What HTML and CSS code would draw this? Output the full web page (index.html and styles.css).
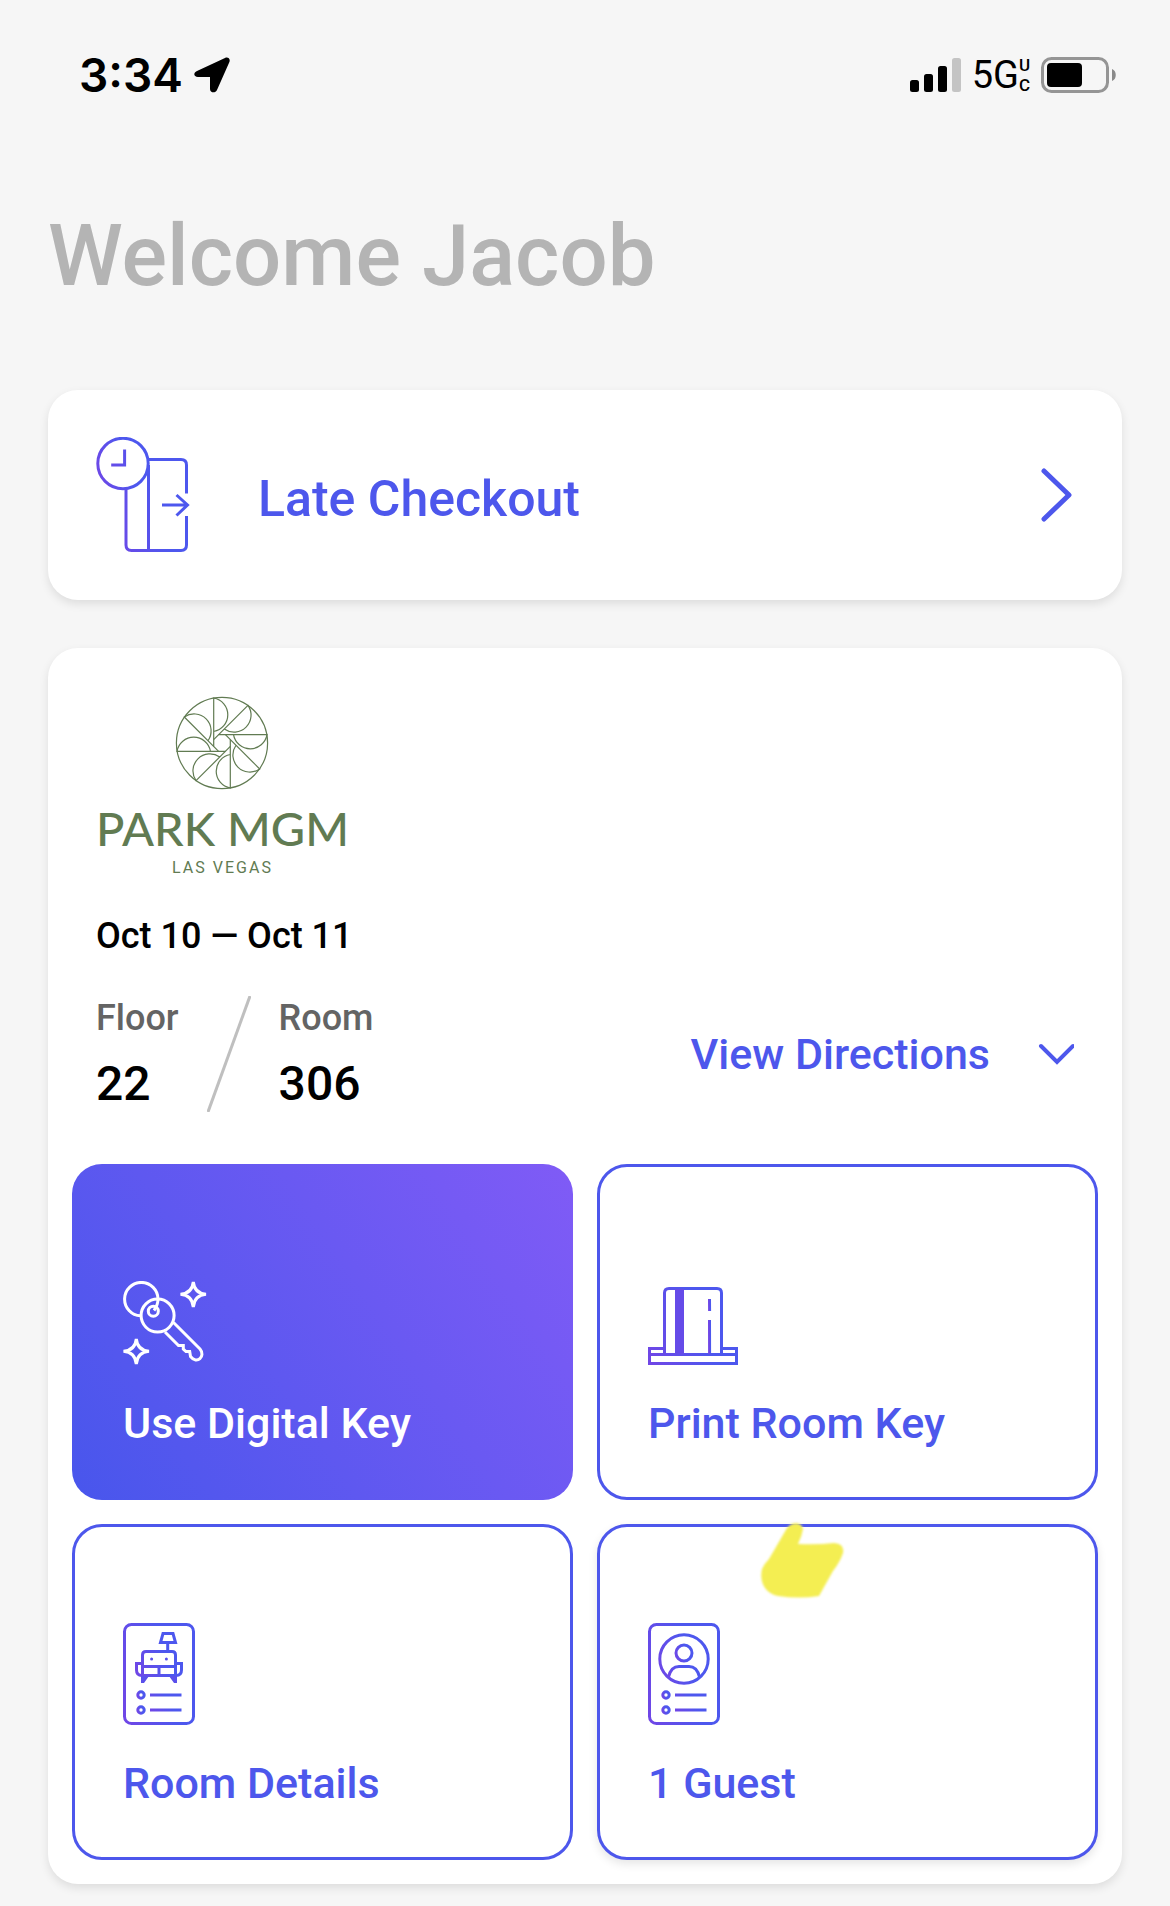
FILE: index.html
```html
<!DOCTYPE html>
<html lang="en">
  <head>
    <meta charset="UTF-8" />
    <meta name="viewport" content="width=device-width, initial-scale=1.0" />
    <title>My Stay</title>
    <link rel="stylesheet" href="styles.css">
  </head>
  <body>
    <div class="status-bar">
      <div class="status-left">
        <span class="status-time">3:34</span>
        <svg width="36" height="36" viewBox="0 0 36 36">
          <path d="M3 14 31 1C34-.4 36.600 2 35.400 5L23 33C21.500 36.500 16 36 16 32V20H4C-.5 20-1 15.800 3 14Z" />
        </svg>
      </div>
      <div class="status-right">
        <svg width="51" height="34" viewBox="0 0 51 34">
          <rect x="0" y="22" width="9" height="12" rx="2.500" />
          <rect x="14" y="16" width="9" height="18" rx="2.500" />
          <rect x="28" y="8" width="9" height="26" rx="2.500" />
          <rect x="42" y="0" width="9" height="34" rx="2.500" fill="#c4c4c4" />
        </svg>
        <div class="network">
          <span>5G</span>
          <span class="network-uc"><span>U</span><span>C</span></span>
        </div>
        <svg width="75" height="36" viewBox="0 0 75 36">
          <rect x="1.500" y="1.500" width="65" height="33" rx="9" fill="none" stroke="#959595" stroke-width="3" />
          <rect x="6" y="6" width="35" height="24" rx="4" />
          <path d="M71 12C76 13.500 76 22.500 71 24Z" fill="#8a8a8a" />
        </svg>
      </div>
    </div>

    <main>
      <h1>Welcome Jacob</h1>

      <button class="card checkout" type="button">
        <svg width="94" height="116" viewBox="0 -1 94 116" fill="none" stroke="url(#iconGradient)" stroke-width="3">
          <defs>
            <linearGradient id="iconGradient" x1="0" y1="1" x2="1" y2="0.700">
              <stop offset="0" stop-color="#7046e6" />
              <stop offset="0.700" stop-color="#4d57ee" />
            </linearGradient>
          </defs>
          <circle cx="27" cy="25.500" r="25.200" />
          <path d="M28.600 11.500V27H15.200M30 51V107Q30 112.500 35.500 112.500H85Q90.500 112.500 90.500 107V78M52.500 27V112M53 21.500H85Q90.500 21.500 90.500 27V55.500M66 67H91.500M80.500 57 91.500 67 80.500 77.500" />
        </svg>
        <span class="checkout-label">Late Checkout</span>
        <svg class="checkout-arrow" width="34" height="54" viewBox="0 0 34 54" fill="none" stroke="#4d57ec" stroke-width="5" stroke-linecap="round" stroke-linejoin="round">
          <path d="M4 3 29 27 4 51" />
        </svg>
      </button>

      <section class="card stay">
        <div class="stay-info">
          <div class="hotel">
            <svg width="94" height="94" viewBox="-47 -47 94 94" fill="none" stroke="#617b52" stroke-width="1.200">
              <defs>
                <path id="petal" d="M-8.300 3.500V-45A17 17 0 0 1-8.300-11.500" />
              </defs>
              <circle r="45.600" />
              <use href="#petal" />
              <use href="#petal" transform="rotate(45)" />
              <use href="#petal" transform="rotate(90)" />
              <use href="#petal" transform="rotate(135)" />
              <use href="#petal" transform="rotate(180)" />
              <use href="#petal" transform="rotate(225)" />
              <use href="#petal" transform="rotate(270)" />
              <use href="#petal" transform="rotate(315)" />
            </svg>
            <span class="hotel-name">PARK MGM</span>
            <span class="hotel-city">LAS VEGAS</span>
          </div>

          <p class="dates">Oct 10 — Oct 11</p>

          <div class="room-row">
            <div class="room-item">
              <span class="room-label">Floor</span>
              <span class="room-value">22</span>
            </div>
            <svg class="slash" width="44" height="116" viewBox="0 0 44 116" stroke="#bfbfbf" stroke-width="3">
              <path d="M43 0 1 116" />
            </svg>
            <div class="room-item">
              <span class="room-label">Room</span>
              <span class="room-value">306</span>
            </div>
            <button class="directions" type="button">
              View Directions
              <svg width="38" height="24" viewBox="0 0 38 24" fill="none" stroke="#4d57ec" stroke-width="4" stroke-linecap="round">
                <path d="M5 4 21 20 37 4" />
              </svg>
            </button>
          </div>
        </div>

        <div class="tiles">
          <button class="tile tile-primary" type="button">
            <svg width="84" height="84" viewBox="0 0 84 84" fill="none" stroke="#fff" stroke-width="3">
              <path d="M17.500 34.800A16.700 16.700 0 1 1 35 18Q35 24 31 29.500" />
              <circle cx="34.600" cy="34.600" r="16.500" />
              <circle cx="30.300" cy="30.200" r="5" />
              <path d="M50.500 41.500 77 68C83 75 74 84 67.500 75.500L66.700 70.500H63L60.300 68V64.500H55.500L42 51" />
              <path id="spark" d="M70.300 1C71 8 75.500 12.600 83 13.300C75.500 14 71 18.500 70.300 26C69.600 18.500 65 14 57.500 13.300C65 12.600 69.600 8 70.300 1Z" />
              <use href="#spark" x="-57" y="57" />
            </svg>
            <span>Use Digital Key</span>
          </button>

          <button class="tile" type="button">
            <svg width="90" height="78" viewBox="0 0 90 78" fill="none" stroke="url(#iconGradient)" stroke-width="3">
              <path d="M16.500 67V6Q16.500 1.500 21 1.500H69Q73.500 1.500 73.500 6V67M15 61.500H1.500V76.500H88.500V61.500H75M1.500 67.500H88.500" />
              <path d="M61.500 12 61.600 24M61.500 33 61.600 67" />
              <path d="M27 2H36V67H27Z" fill="#654be8" stroke="none" />
            </svg>
            <span>Print Room Key</span>
          </button>

          <button class="tile" type="button">
            <svg width="72" height="102" viewBox="0 0 72 102" fill="none" stroke="url(#iconGradient)" stroke-width="3">
              <rect x="1.500" y="1.500" width="69" height="99" rx="7" />
              <path d="M40 10.500H50L52.500 19.500H37.500ZM44.700 20V28M19.500 52.500V32Q19.500 28.500 23 28.500H49Q52.500 28.500 52.500 32V52.500ZM19.500 43.500H52.500M36 43.500V52.500M19 40.500H13.500V47Q13.500 52.500 19 52.500M53 40.500H58.500V47Q58.500 52.500 53 52.500" />
              <path d="M18 53V60H21L26 53ZM54 53V60H51L46 53Z" fill="#5a50eb" stroke="none" />
              <g fill="#5a50eb" stroke="none">
                <circle cx="28.600" cy="36" r="1.500" />
                <circle cx="43.400" cy="36" r="1.500" />
              </g>
              <circle cx="18" cy="72" r="3.200" />
              <circle cx="18" cy="87" r="3.200" />
              <path d="M27 72 58.500 72.100M27 87 58.500 87.100" />
            </svg>
            <span>Room Details</span>
          </button>

          <button class="tile tile-guest" type="button">
            <svg width="72" height="102" viewBox="0 0 72 102" fill="none" stroke="url(#iconGradient)" stroke-width="3">
              <rect x="1.500" y="1.500" width="69" height="99" rx="7" />
              <circle cx="36" cy="36" r="24.200" />
              <circle cx="36" cy="30" r="8" />
              <path d="M20.500 54Q23 43.500 31 43.500H41Q49 43.500 51.500 54" />
              <circle cx="18" cy="72" r="3.200" />
              <circle cx="18" cy="87" r="3.200" />
              <path d="M27 72 58.500 72.100M27 87 58.500 87.100" />
            </svg>
            <span>1 Guest</span>
            <!-- highlighter mark -->
            <svg class="marker" width="84" height="77" viewBox="0 0 84 77">
              <path d="M26 6C31-1 41 0 42 7Q41 14 37 22Q56 23 73 21Q84 22 82 31Q79 40 72 49L58 74Q38 77 17 74C4 71-2 60 1 47Q3 42 8 37Z" fill="#f4ee52" />
            </svg>
          </button>
        </div>
      </section>
    </main>
  </body>
</html>
```
FILE: styles.css
```css
* {
  box-sizing: border-box;
}
body {
  margin: 0;
  background-color: #f6f6f6;
  font-family: Roboto, "Liberation Sans", sans-serif;
  font-weight: 500;
  color: #000;
}
svg {
  display: block;
  flex-shrink: 0;
}
button {
  font: inherit;
  color: #4d57ec;
  border: none;
  background: none;
  padding: 0;
  text-align: left;
  cursor: pointer;
}

/* status bar */
.status-bar {
  display: flex;
  justify-content: space-between;
  align-items: center;
  height: 150px;
  padding: 0 54px 0 79px;
}
.status-left,
.status-right,
.network {
  display: flex;
  align-items: center;
}
.status-left {
  gap: 11px;
}
.status-right {
  gap: 11px;
}
.status-time {
  font-family: Inter, sans-serif;
  font-size: 46px;
  font-weight: 600;
}
.network {
  font-size: 38px;
  font-weight: 400;
}
.network-uc {
  display: flex;
  flex-direction: column;
  font-size: 17px;
  line-height: 20px;
  font-weight: 500;
}

main {
  padding: 0 48px 22px;
}
h1 {
  margin: 58px 0 86px;
  font-size: 85px;
  line-height: 96px;
  font-weight: 500;
  color: #b4b4b4;
}

.card {
  width: 100%;
  background-color: #fff;
  border-radius: 30px;
  box-shadow: 0 4px 10px rgba(0, 0, 0, 0.1);
}

/* late checkout */
.checkout {
  display: flex;
  align-items: center;
  height: 210px;
  padding: 0 48px;
  margin-bottom: 48px;
}
.checkout-label {
  padding-top: 8px;
  margin-left: 68px;
  font-size: 50px;
  line-height: 56px;
}
.checkout-arrow {
  margin-left: auto;
}

/* stay card */
.stay {
  padding: 48px 24px 24px;
}
.stay-info {
  padding: 0 24px;
}
.hotel {
  display: flex;
  flex-direction: column;
  align-items: center;
  width: fit-content;
  color: #617b52;
}
.hotel-name {
  margin-top: 14px;
  font-family: Lato, sans-serif;
  font-size: 47px;
  line-height: 48px;
}
.hotel-city {
  margin-top: 6px;
  font-size: 16px;
  line-height: 20px;
  font-weight: 400;
  letter-spacing: 2px;
}
.dates {
  margin: 36px 0 38px;
  font-size: 36px;
  line-height: 44px;
}
.room-row {
  display: flex;
  align-items: center;
}
.room-item {
  display: flex;
  flex-direction: column;
  gap: 16px;
}
.room-label {
  font-size: 36px;
  line-height: 44px;
  color: #646464;
}
.room-value {
  font-size: 48px;
  line-height: 56px;
}
.slash {
  margin: 0 28px;
}
.directions {
  display: flex;
  align-items: center;
  gap: 46px;
  margin-left: auto;
  font-size: 43px;
  line-height: 48px;
}

.tiles {
  display: grid;
  grid-template-columns: 1fr 1fr;
  gap: 24px;
  margin-top: 52px;
}
.tile {
  position: relative;
  display: flex;
  flex-direction: column;
  justify-content: flex-end;
  gap: 34px;
  height: 336px;
  padding: 0 48px 50px;
  border: 3px solid #4d57ec;
  border-radius: 30px;
  font-size: 43px;
  line-height: 48px;
}
.tile-primary {
  border: none;
  padding: 0 51px 53px;
  color: #fff;
  background: linear-gradient(56deg, #4856ec, #805bf6);
}
.tile-guest {
  background-color: #fff;
  box-shadow: 0 4px 10px rgba(0, 0, 0, 0.1);
}
.marker {
  position: absolute;
  left: 161px;
  top: -5px;
  filter: blur(1px);
}
```
